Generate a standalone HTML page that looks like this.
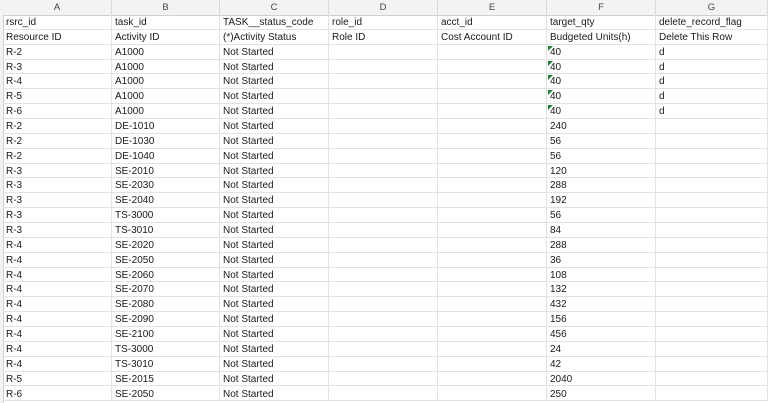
<!DOCTYPE html><html><head><style>
body{margin:0;width:768px;height:403px;overflow:hidden;background:#fff;font-family:"Liberation Sans",sans-serif;position:relative}
.h{position:absolute;top:0;height:15px;background:#f3f3f3;border-bottom:1px solid #d0d0d0;left:0;width:768px}
.hc{position:absolute;top:0;height:15px;line-height:15px;text-align:center;font-size:9.5px;color:#444;border-right:1px solid #d8d8d8;box-sizing:border-box}
.r{position:absolute;left:3px;width:765px;height:14.86px;border-bottom:1px solid #e2e2e2;box-sizing:border-box}
.c{position:absolute;top:0;height:14px;line-height:15px;font-size:10px;color:#1a1a1a;padding-left:3px;box-sizing:border-box;border-right:1px solid #e2e2e2;white-space:nowrap;overflow:hidden}
.tri{position:absolute;left:1px;top:1px;width:0;height:0;border-top:5px solid #1e7e34;border-right:5px solid transparent}
</style></head><body>
<div class="h"></div>
<div class="hc" style="left:3px;width:109px">A</div>
<div class="hc" style="left:112px;width:108px">B</div>
<div class="hc" style="left:220px;width:109px">C</div>
<div class="hc" style="left:329px;width:109px">D</div>
<div class="hc" style="left:438px;width:109px">E</div>
<div class="hc" style="left:547px;width:109px">F</div>
<div class="hc" style="left:656px;width:112px">G</div>
<div style="position:absolute;left:0;top:15px;width:3px;height:388px;background:#f3f3f3;border-right:1px solid #d0d0d0"></div>
<div id="g"></div>
<script>
const rows=[
["rsrc_id","task_id","TASK__status_code","role_id","acct_id","target_qty","delete_record_flag"],
["Resource ID","Activity ID","(*)Activity Status","Role ID","Cost Account ID","Budgeted Units(h)","Delete This Row"]];
const d=[["R-2","A1000","40","d"],["R-3","A1000","40","d"],["R-4","A1000","40","d"],["R-5","A1000","40","d"],["R-6","A1000","40","d"],
["R-2","DE-1010","240"],["R-2","DE-1030","56"],["R-2","DE-1040","56"],["R-3","SE-2010","120"],["R-3","SE-2030","288"],["R-3","SE-2040","192"],["R-3","TS-3000","56"],["R-3","TS-3010","84"],["R-4","SE-2020","288"],["R-4","SE-2050","36"],["R-4","SE-2060","108"],["R-4","SE-2070","132"],["R-4","SE-2080","432"],["R-4","SE-2090","156"],["R-4","SE-2100","456"],["R-4","TS-3000","24"],["R-4","TS-3010","42"],["R-5","SE-2015","2040"],["R-6","SE-2050","250"]];
d.forEach(x=>rows.push([x[0],x[1],"Not Started","","",x[2],x[3]||"",x[3]?1:0]));
const L=[0,109,217,326,435,544,653],W=[109,108,109,109,109,109,112];
let h="";
rows.forEach((r,i)=>{h+=`<div class="r" style="top:${15+i*14.86}px">`;
for(let j=0;j<7;j++){h+=`<div class="c" style="left:${L[j]}px;width:${W[j]}px">${j==5&&r[7]?'<span class="tri"></span>':''}${r[j]}</div>`}
h+="</div>"});
document.getElementById("g").innerHTML=h;
</script>
</body></html>
